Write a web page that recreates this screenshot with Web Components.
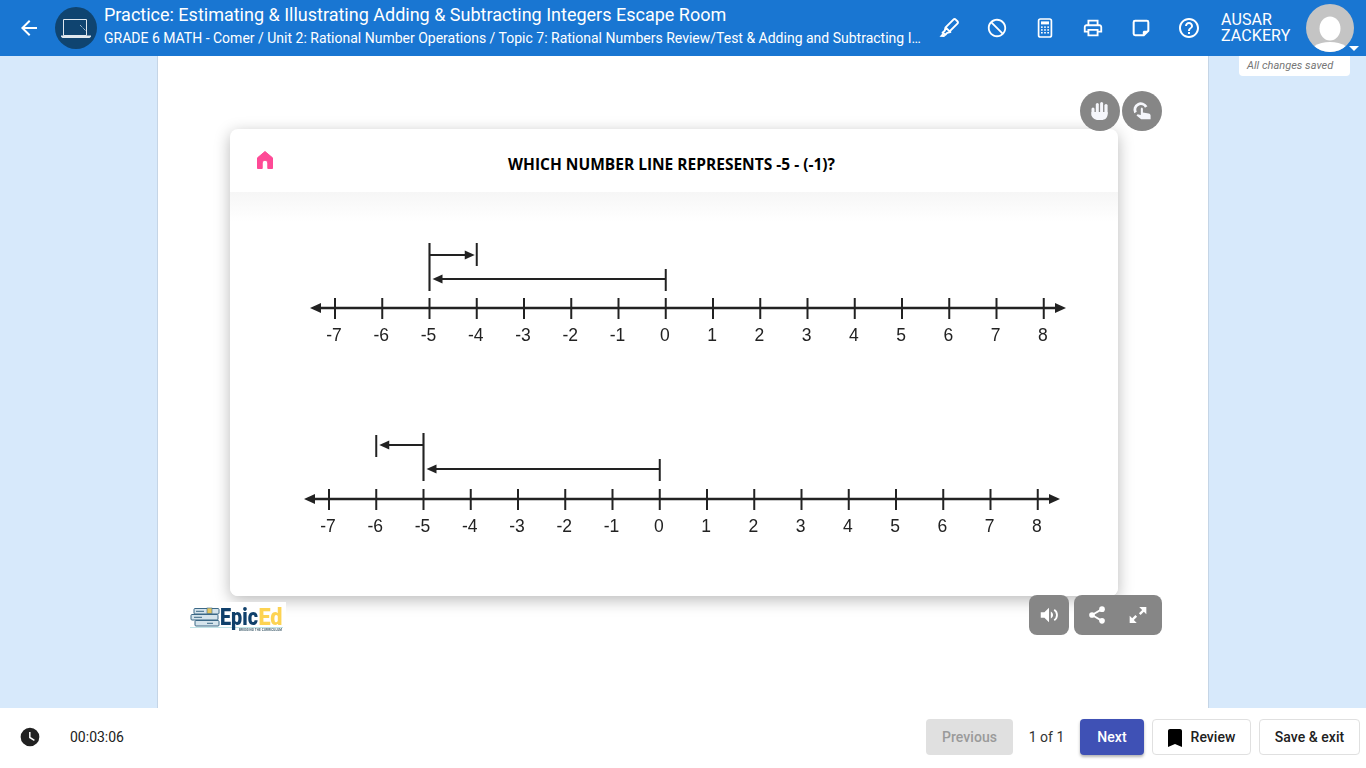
<!DOCTYPE html>
<html lang="en">
<head>
<meta charset="utf-8">
<title>Escape Room</title>
<style>
html,body{margin:0;height:100%;overflow:hidden;font-family:Roboto,"Liberation Sans",sans-serif}
</style>
</head>
<body>
<quiz-app>
  <top-bar slot="top"
    heading="Practice: Estimating &amp; Illustrating Adding &amp; Subtracting Integers Escape Room"
    crumbs="GRADE 6 MATH - Comer / Unit 2: Rational Number Operations / Topic 7: Rational Numbers Review/Test &amp; Adding and Subtracting Integers Escape Room"></top-bar>
  <quiz-stage>
    <question-card heading="WHICH NUMBER LINE REPRESENTS -5 - (-1)?">
      <number-line origin="335" hop="right" axis="68" labels="101"></number-line>
      <number-line origin="329" hop="left" axis="69" labels="102"></number-line>
    </question-card>
  </quiz-stage>
  <foot-bar slot="foot"></foot-bar>
</quiz-app>

<script>
// icons are 24x24 material style unless noted
const ICONS = {
  back: '<path d="M20 11H7.83l5.59-5.59L12 4l-8 8 8 8 1.41-1.41L7.83 13H20v-2z"/>',
  pen: '<path fill="none" stroke="currentColor" stroke-width="2" stroke-linejoin="round" d="M8.600 11.400 16.400 3.600c.7-.7 1.600-.7 2.300 0l1.700 1.700c.7.700.7 1.600 0 2.300l-7.800 7.800zM8.600 11.400l-.8 3.200-2.200 2.200 2.700 2 1.900-1.900 3-.8.600-.7"/><path d="M2.500 20.800l2.900-3.400 3.100 2.300-1.400 1.300z"/>',
  block: '<path d="M12 2C6.480 2 2 6.480 2 12s4.480 10 10 10 10-4.480 10-10S17.520 2 12 2zm0 18c-4.420 0-8-3.580-8-8 0-1.850.63-3.550 1.690-4.900L16.900 18.310C15.550 19.370 13.850 20 12 20zm6.310-3.100L7.100 5.690C8.450 4.630 10.150 4 12 4c4.420 0 8 3.580 8 8 0 1.850-.63 3.550-1.690 4.900z"/>',
  calc: '<rect x="5.600" y="3" width="12.800" height="18" rx="1.800" fill="none" stroke="currentColor" stroke-width="1.700"/><rect x="8" y="5.400" width="8" height="3"/><g><rect x="8" y="10.400" width="1.700" height="1.500"/><rect x="11.150" y="10.400" width="1.700" height="1.500"/><rect x="14.300" y="10.400" width="1.700" height="1.500"/><rect x="8" y="13.200" width="1.700" height="1.500"/><rect x="11.150" y="13.200" width="1.700" height="1.500"/><rect x="14.300" y="13.200" width="1.700" height="1.500"/><rect x="8" y="16" width="1.700" height="1.500"/><rect x="11.150" y="16" width="1.700" height="1.500"/><rect x="14.300" y="16" width="1.700" height="1.500"/></g>',
  print: '<path d="M19 8h-1V3H6v5H5c-1.660 0-3 1.340-3 3v6h4v4h12v-4h4v-6c0-1.660-1.340-3-3-3zM8 5h8v3H8V5zm8 14H8v-4h8v4zm4-4h-2v-2H6v2H4v-4c0-.55.45-1 1-1h14c.55 0 1 .45 1 1v4z"/>',
  note: '<path fill="none" stroke="currentColor" stroke-width="2.200" stroke-linejoin="round" d="M5.600 4h12.800c.9 0 1.600.7 1.600 1.600V15l-5 5H5.600c-.9 0-1.600-.7-1.600-1.600V5.600C4 4.700 4.700 4 5.600 4z"/><path d="M14 20v-3.400c0-1 .7-1.600 1.600-1.600H20z"/>',
  help: '<path d="M11 18h2v-2h-2v2zm1-16C6.480 2 2 6.480 2 12s4.480 10 10 10 10-4.480 10-10S17.520 2 12 2zm0 18c-4.410 0-8-3.590-8-8s3.590-8 8-8 8 3.590 8 8-3.590 8-8 8zm0-14c-2.210 0-4 1.790-4 4h2c0-1.100.9-2 2-2s2 .9 2 2c0 2-3 1.750-3 5h2c0-2.250 3-2.500 3-5 0-2.210-1.790-4-4-4z"/>',
  hand: '<rect x="3.500" y="8.500" width="3" height="9" rx="1.500"/><rect x="7.800" y="4" width="3" height="10" rx="1.500"/><rect x="12.100" y="3" width="3" height="11" rx="1.500"/><rect x="16.400" y="5" width="3.200" height="11" rx="1.600"/><path d="M3.500 13H19.600v2c0 3.900-2.500 6-6.300 6h-3c-4 0-6.800-2.500-6.800-6z"/>',
  touch: '<path d="M5.500 13.500A5.600 5.600 0 1 1 16.200 8" fill="none" stroke="currentColor" stroke-width="2.800"/><path d="M11.400 8.600c.9 0 1.500.6 1.500 1.500v3.300l5.800 1c1.200.2 1.900 1.100 1.900 2.200v3.700h-9.400l-4.700-3.700 1.100-1.300 3.200.8v-6c0-.9.700-1.500 1.500-1.500z"/>',
  sound: '<path d="M3 9v6h4l5 5V4L7 9H3z"/><path d="M14 8.200c1.500.8 2.400 2.200 2.400 3.800s-.9 3-2.400 3.800z"/><path d="M17.700 6.300c1.900 1.300 3 3.400 3 5.700s-1.100 4.400-3 5.700" fill="none" stroke="currentColor" stroke-width="2"/>',
  share: '<circle cx="18" cy="5" r="3.400"/><circle cx="6" cy="12" r="3.400"/><circle cx="18" cy="19" r="3.400"/><path d="M6 12 18 5M6 12l12 7" stroke="currentColor" stroke-width="2.200"/>',
  expand: '<path d="M13.500 2.500H22v8.500l-3-3-3.900 3.900-2-2L17 6zM10.500 21.500H2V13l3 3 3.900-3.900 2 2L7 18z"/>',
  clock: '<path d="M12 1.800a10.200 10.200 0 1 0 0 20.400 10.200 10.200 0 0 0 0-20.400zm4.400 14.500L11 13V6.500h1.600v5.600l4.600 2.800z"/>',
  bookmark: '<path d="M17 3H7c-1.100 0-2 .9-2 2v16l7-3 7 3V5c0-1.100-.9-2-2-2z"/>',
  home: '<path stroke="currentColor" stroke-width="1" stroke-linejoin="round" d="M12 3.500 4.500 9.800v10.700h4.700V15a2.800 2.800 0 0 1 5.600 0v5.500h4.700V9.800z"/>'
}
const icon = (name, size) => `<svg width="${size}" height="${size}" viewBox="0 0 24 24" fill="currentColor" aria-hidden="true">${ICONS[name]}</svg>`

class QuizApp extends HTMLElement {
  constructor() {
    super()
    this.attachShadow({ mode: 'open' }).innerHTML = `<style>
:host{display:grid;grid-template-rows:56px 1fr 60px;height:100vh;background:#d7e9fb;font-family:Roboto,"Liberation Sans",sans-serif}
main{display:flex;justify-content:center;min-height:0}
</style>
<slot name="top"></slot>
<main><slot></slot></main>
<slot name="foot"></slot>`
  }
}

class TopBar extends HTMLElement {
  connectedCallback() {
    const tools = [['pen', 24], ['block', 22], ['calc', 24], ['print', 22], ['note', 22], ['help', 24]]
    this.attachShadow({ mode: 'open' }).innerHTML = `<style>
:host{display:flex;align-items:center;position:relative;z-index:3;background:#1976d2;color:#fff;height:56px;padding-left:17px}
.back{display:flex;width:24px;margin-right:14px}
.badge{width:42px;height:42px;border-radius:50%;background:#0f4470;display:flex;align-items:center;justify-content:center;flex:none;margin-right:7px}
.txt{width:820px;margin-right:13px;flex:none}
.txt div{white-space:nowrap;overflow:hidden;text-overflow:ellipsis}
.h{font-size:18px;line-height:24px;margin-top:-6px}
.s{font-size:14px;line-height:20px;margin-top:1px}
.tools{display:flex;gap:24px;flex:none}
.tools span{display:flex;align-items:center;justify-content:center;width:24px;height:24px}
.name{font-size:16px;line-height:16px;margin-left:20px;width:85px;flex:none;letter-spacing:.1px}
.me{width:48px;height:48px;border-radius:50%;background:#c4c4c4;overflow:hidden;flex:none;display:block}
.caret{position:absolute;left:1349px;top:46px;width:0;height:0;border:5px solid transparent;border-top:5px solid #fff;border-bottom:0}
.saved{position:absolute;left:1239px;top:56px;width:111px;height:20px;box-sizing:border-box;background:#fff;border-radius:0 0 4px 4px;color:#757575;font-size:11px;font-style:italic;line-height:20px;padding-left:8px;white-space:nowrap;letter-spacing:.02px}
</style>
<span class="back">${icon('back', 24)}</span>
<span class="badge"><svg width="32" height="24" viewBox="0 0 32 24"><path fill="none" stroke="#dfe8ef" stroke-width="1" d="M3.500 3.500h23v16h-23z"/><path fill="#dfe8ef" d="M1 19.500h30v1.200l-1.500 1.300h-27L1 20.700z"/><path stroke="#dfe8ef" stroke-width="1" stroke-dasharray="1 1" fill="none" d="M20 9l6 6"/></svg></span>
<div class="txt"><div class="h">${this.getAttribute('heading')}</div><div class="s">${this.getAttribute('crumbs')}</div></div>
<div class="tools">${tools.map(([t, s]) => `<span>${icon(t, s)}</span>`).join('')}</div>
<div class="name">AUSAR ZACKERY</div>
<svg class="me" viewBox="0 0 48 48"><ellipse cx="24" cy="24.500" rx="10.500" ry="12" fill="#fff"/><ellipse cx="24" cy="52" rx="22" ry="14" fill="#fff"/></svg>
<span class="caret"></span>
<div class="saved">All changes saved</div>`
  }
}

class RoundTool extends HTMLElement {
  connectedCallback() {
    this.attachShadow({ mode: 'open' }).innerHTML = `<style>
:host{display:flex;align-items:center;justify-content:center;width:40px;height:40px;border-radius:50%;background:#868686;color:#f5f6fb}
</style>${icon(this.getAttribute('icon'), 24)}`
  }
}

class QuizStage extends HTMLElement {
  constructor() {
    super()
    this.attachShadow({ mode: 'open' }).innerHTML = `<style>
:host{display:block;box-sizing:border-box;width:1052px;background:#fff;border:solid #c5d5e6;border-width:0 1px;padding:35px 46px 0 32px;height:100%}
.tools{display:flex;justify-content:flex-end;gap:2px;height:38px;position:relative;z-index:2}
.card{margin-left:40px}
.under{display:flex;align-items:flex-start;margin-top:-1px;position:relative}
.logo{margin-top:7px;flex:none}
.ctl{margin-left:auto;display:flex;gap:5px;color:#fff}
.ctl div{display:flex;align-items:center;height:40px;background:#868686;border-radius:8px}
.snd{width:40px;justify-content:center}
.pair{width:88px;padding-left:13px;gap:21px;box-sizing:border-box}
</style>
<div class="tools"><round-tool icon="hand"></round-tool><round-tool icon="touch"></round-tool></div>
<div class="card"><slot></slot></div>
<div class="under">
  <epic-logo class="logo"></epic-logo>
  <div class="ctl"><div class="snd">${icon('sound', 22)}</div><div class="pair">${icon('share', 20)}${icon('expand', 20)}</div></div>
</div>`
  }
}

class EpicLogo extends HTMLElement {
  constructor() {
    super()
    this.attachShadow({ mode: 'open' }).innerHTML = `<style>
:host{display:block;width:96px;height:30px;background:#fff}
svg{display:block;filter:blur(.4px)}
</style>
<svg width="96" height="30" viewBox="0 0 96 30">
  <path d="M0 25.500h93" stroke="#bfe3e6" stroke-width="1"/>
  <g fill="#d5e4ec" stroke="#3b6886" stroke-width="1">
    <rect x="4" y="6.500" width="25" height="5.500" rx="1"/>
    <rect x="1" y="12.500" width="27" height="5.500" rx="1"/>
    <rect x="5" y="18.500" width="24" height="5.500" rx="1"/>
  </g>
  <path d="M6 9.300h8M4 15.300h8M17 21.300h6" stroke="#3b6886" stroke-width="1"/>
  <rect x="17" y="6" width="5" height="5.500" fill="#e5c65c" stroke="#3b6886" stroke-width=".6"/>
  <text x="30" y="23" font-family="Roboto,'Liberation Sans',sans-serif" font-weight="900" font-size="24" textLength="38" lengthAdjust="spacingAndGlyphs" fill="#10406b">Epic</text>
  <text x="68.500" y="23" font-family="Roboto,'Liberation Sans',sans-serif" font-weight="900" font-size="24" textLength="24" lengthAdjust="spacingAndGlyphs" fill="#fdd352">Ed</text>
  <text x="49" y="28.800" font-family="Roboto,'Liberation Sans',sans-serif" font-weight="700" font-size="3" textLength="43" fill="#44606f">BRIDGING THE CURRICULUM</text>
</svg>`
  }
}

class QuestionCard extends HTMLElement {
  connectedCallback() {
    this.attachShadow({ mode: 'open' }).innerHTML = `<style>
:host{display:block;width:888px;height:467px;background:#fff;border-radius:8px;box-shadow:0 4px 16px rgba(0,0,0,.28);overflow:hidden}
header{display:flex;align-items:center;justify-content:center;position:relative;height:63px;color:#000;font:700 15.500px "Open Sans","Liberation Sans",sans-serif;padding:7px 5px 0 0;box-sizing:border-box}
.home{position:absolute;left:23px;top:19px;color:#fe4a96;display:flex}
.body{display:flex;flex-direction:column;gap:80px;padding-top:48px;height:404px;box-sizing:border-box;background:linear-gradient(#f6f6f6,#fff 30px)}
</style>
<header><span class="home">${icon('home', 24)}</span>${this.getAttribute('heading')}</header>
<div class="body"><slot></slot></div>`
  }
}

class NumberLine extends HTMLElement {
  connectedCallback() {
    const ox = Number(this.getAttribute('origin'))
    const axis = Number(this.getAttribute('axis'))
    const labels = Number(this.getAttribute('labels'))
    const step = 47.25
    const at = n => ox + (n + 7) * step
    const hop = this.getAttribute('hop')
    const five = at(-5), zero = at(0)
    let marks = ''
    for (let n = -7; n <= 8; n++) {
      marks += `<path d="M${at(n)} ${axis - 10}v21" stroke-width="2"/>`
      marks += `<text x="${at(n) - 1}" y="${labels}" text-anchor="middle" stroke="none">${n}</text>`
    }
    let hops = `<path d="M${five} 3v48" stroke-width="2.100"/><path d="M${zero} 29v22" stroke-width="2"/><path d="M${zero} 39H${five + 6}" stroke-width="1.900"/><path stroke="none" d="M${five + 3} 39l10 -4.500v9z"/>`
    if (hop === 'right') {
      hops += `<path d="M${at(-4)} 3v23" stroke-width="2"/><path d="M${five} 15H${at(-4) - 6}" stroke-width="1.900"/><path stroke="none" d="M${at(-4) - 2} 15l-10 -4.500v9z"/>`
    } else {
      hops += `<path d="M${at(-6)} 5v22" stroke-width="2"/><path d="M${five} 15H${at(-6) + 6}" stroke-width="1.900"/><path stroke="none" d="M${at(-6) + 3} 15l10 -4.500v9z"/>`
    }
    const l = ox - 25, r = ox + 731
    this.attachShadow({ mode: 'open' }).innerHTML = `<style>
:host{display:block;height:110px}
svg{display:block;overflow:visible;filter:blur(.35px)}
text{font:17.500px "Liberation Sans",Arial,sans-serif;fill:#222}
</style>
<svg width="888" height="110" viewBox="230 0 888 110" stroke="#222" fill="#222">
  <path d="M${l + 6} ${axis}H${r - 6}" stroke-width="2.500"/>
  <path stroke="none" d="M${l} ${axis}l11 -5v10z"/><path stroke="none" d="M${r} ${axis}l-11 -5v10z"/>
  ${marks}${hops}
</svg>`
  }
}

class FootBar extends HTMLElement {
  constructor() {
    super()
    this.attachShadow({ mode: 'open' }).innerHTML = `<style>
:host{display:flex;align-items:center;background:#fff;height:60px;padding:0 6px 2px 19px;box-sizing:border-box;color:#212121;font-size:14px;position:relative;z-index:2}
.clock{display:flex;width:22px;color:#212121;margin-right:29px}
.spacer{flex:1}
.btn{display:flex;align-items:center;justify-content:center;height:36px;box-sizing:border-box;border-radius:4px;font-weight:500;letter-spacing:.05px}
.prev{width:87px;background:#e0e0e0;color:#9a9a9a}
.of{width:67px;text-align:center;color:#333}
.next{width:64px;background:#3f51b5;color:#fff;box-shadow:0 2px 3px rgba(0,0,0,.3);margin-right:8px}
.out{border:1px solid #e0e0e0;background:#fff;color:#212121}
.rev{width:99px;gap:4px;margin-right:8px}
.rev svg{margin-top:2px;margin-left:-5px;color:#000}
.save{width:101px}
</style>
<span class="clock">${icon('clock', 22)}</span><span>00:03:06</span>
<span class="spacer"></span>
<span class="btn prev">Previous</span><span class="of">1 of 1</span><span class="btn next">Next</span>
<span class="btn out rev">${icon('bookmark', 24)}Review</span><span class="btn out save">Save &amp; exit</span>`
  }
}

customElements.define('quiz-app', QuizApp)
customElements.define('top-bar', TopBar)
customElements.define('round-tool', RoundTool)
customElements.define('quiz-stage', QuizStage)
customElements.define('epic-logo', EpicLogo)
customElements.define('question-card', QuestionCard)
customElements.define('number-line', NumberLine)
customElements.define('foot-bar', FootBar)
</script>
</body>
</html>
